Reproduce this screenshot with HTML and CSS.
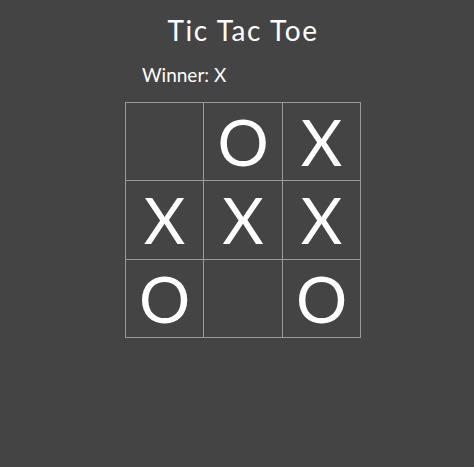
FILE: index.html
```html
<!DOCTYPE html>
<html>
<head>
<meta charset="utf-8">
<link rel="stylesheet" href="styles.css">
</head>
<body>
<div class="game">
  <h1 class="title">Tic Tac Toe</h1>
  <div class="status">Winner: X</div>
  <div class="board">
    <div class="cell"></div>
    <div class="cell">O</div>
    <div class="cell">X</div>
    <div class="cell">X</div>
    <div class="cell">X</div>
    <div class="cell">X</div>
    <div class="cell">O</div>
    <div class="cell"></div>
    <div class="cell">O</div>
  </div>
</div>
</body>
</html>
```
FILE: styles.css
```css
html, body {
  margin: 0;
  padding: 0;
  background: #444444;
  height: 100%;
}
body {
  font-family: "Lato", "DejaVu Sans", sans-serif;
  color: #ffffff;
}
.game {
  width: 236px;
  margin-left: 125px;
  padding-top: 14px;
}
.title {
  margin: 0;
  font-size: 28px;
  font-weight: 400;
  line-height: 32px;
  letter-spacing: 1.6px;
  text-align: center;
}
.status {
  margin-top: 18px;
  padding-left: 17px;
  font-size: 19px;
  line-height: 22px;
}
.board {
  margin-top: 16px;
  display: grid;
  grid-template-columns: 78px 79px 78px;
  grid-template-rows: 78px 79px 78px;
  border-top: 1px solid #9a9a9a;
  border-left: 1px solid #9a9a9a;
  width: max-content;
}
.cell {
  border-right: 1px solid #9a9a9a;
  border-bottom: 1px solid #9a9a9a;
  display: flex;
  align-items: center;
  justify-content: center;
  font-size: 64px;
  line-height: 1;
}
```
